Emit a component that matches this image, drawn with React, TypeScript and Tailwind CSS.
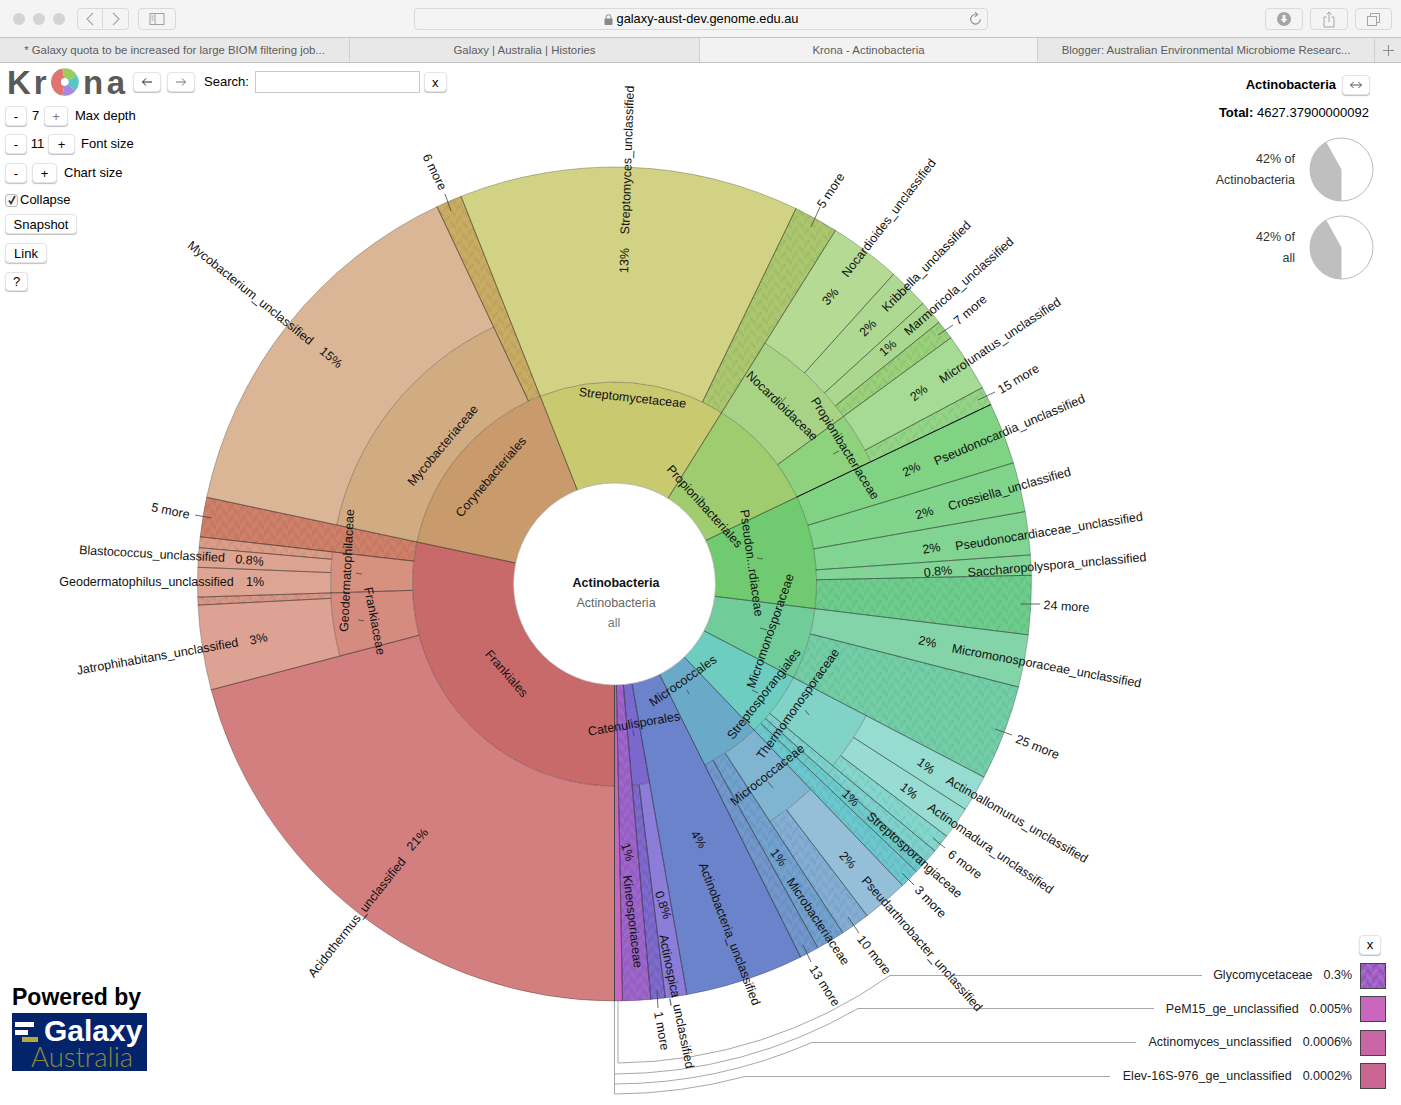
import React from "react";

const CX = 614.5;
const CY = 584;
const R0 = 101;
const R1 = 202;
const R2 = 284;
const R3 = 417;

const pt = (a: number, r: number): [number, number] => {
  const t = (a * Math.PI) / 180;
  return [CX + r * Math.sin(t), CY - r * Math.cos(t)];
};
const f = (n: number) => n.toFixed(2);
const wedgePath = (a0: number, a1: number, r0: number, r1: number) => {
  const [x0, y0] = pt(a0, r1);
  const [x1, y1] = pt(a1, r1);
  const [x2, y2] = pt(a1, r0);
  const [x3, y3] = pt(a0, r0);
  const large = a1 - a0 > 180 ? 1 : 0;
  return `M${f(x0)} ${f(y0)}A${r1} ${r1} 0 ${large} 1 ${f(x1)} ${f(y1)}L${f(x2)} ${f(y2)}A${r0} ${r0} 0 ${large} 0 ${f(x3)} ${f(y3)}Z`;
};

type W = [number, number, number, number, string, boolean?];
const wedges: W[] = [
  // Frankiales
  [180, 282, R0, R1, "#c96a6a"],
  [180, 255.3, R1, R3, "#d37f7f"],
  [255.3, 268.2, R1, R2, "#d58c7f"],
  [255.3, 267.1, R2, R3, "#dea294"],
  [267.1, 268.2, R2, R3, "#d69484", true],
  [268.2, 276.5, R1, R2, "#d6917f"],
  [268.2, 272.3, R2, R3, "#dea594"],
  [272.3, 275, R2, R3, "#dea492"],
  [275, 276.5, R2, R3, "#d99a86", true],
  [276.5, 282, R1, R3, "#cd7d66", true],
  // Corynebacteriales
  [282, 338.4, R0, R1, "#c99a6b"],
  [282, 334.8, R1, R2, "#d1ab81"],
  [282, 334.8, R2, R3, "#dab596"],
  [334.8, 338.4, R1, R3, "#c6aa60", true],
  // Streptomycetaceae
  [338.4, 392, R0, R1, "#c9ca6f"],
  [338.4, 385.8, R1, R3, "#d1d283"],
  [385.8, 392, R1, R3, "#a8c56b", true],
  // Propionibacteriales
  [32, 64.5, R0, R1, "#9ecc6f"],
  [32, 53.8, R1, R2, "#a8d384"],
  [32, 42, R2, R3, "#b5da94"],
  [42, 47.7, R2, R3, "#aed992"],
  [47.7, 51.1, R2, R3, "#aad88f"],
  [51.1, 53.8, R2, R3, "#97cf78", true],
  [53.8, 64.5, R1, R2, "#8ed27e"],
  [53.8, 61.9, R2, R3, "#a5db94"],
  [61.9, 64.5, R2, R3, "#90d384", true],
  // Pseudonocardiales
  [64.5, 97, R0, R1, "#70cb70"],
  [64.5, 73.1, R1, R3, "#7fd383"],
  [73.1, 80, R1, R3, "#80d48b"],
  [80, 86, R1, R3, "#81d491"],
  [86, 88.8, R1, R3, "#82d597"],
  [88.8, 97, R1, R3, "#6bcb8a", true],
  // Micromonosporales
  [97, 117.6, R0, R1, "#70cd9a"],
  [97, 104.3, R1, R3, "#83d5a9"],
  [104.3, 117.6, R1, R3, "#70cca4", true],
  // Streptosporangiales
  [117.6, 136.3, R0, R1, "#6ecdc1"],
  [117.6, 129.8, R1, R2, "#80d3c6"],
  [117.6, 122.7, R2, R3, "#97dcd0"],
  [122.7, 127.2, R2, R3, "#98dcd3"],
  [127.2, 129.8, R2, R3, "#82d5cb", true],
  [129.8, 131.7, R1, R3, "#7ccfcb", true],
  [131.7, 133.6, R1, R3, "#6cc8c8", true],
  [133.6, 136.3, R1, R3, "#69c6cc", true],
  // Micrococcales
  [136.3, 153.5, R0, R1, "#6ba9c9"],
  [136.3, 146.8, R1, R2, "#80b5d2"],
  [136.3, 142.7, R2, R3, "#95bfd9"],
  [142.7, 146.8, R2, R3, "#81abd1", true],
  [146.8, 150.8, R1, R3, "#6f9fcc", true],
  [150.8, 153.5, R1, R3, "#6f94ca", true],
  // unclassified
  [153.5, 170, R0, R3, "#6b83cb"],
  // Catenulisporales
  [170, 175, R0, R1, "#7a68cc"],
  [170, 173, R1, R3, "#8b7dd8"],
  [173, 175, R1, R3, "#7b66c9", true],
  // Kineosporiales
  [175, 178.9, R0, R3, "#9a62c9", true],
  [178.9, 180, R0, R3, "#c566c1"],
];

type Lb = [string, number, number, number, number];
const labels: Lb[] = [
  ["Streptomyces_unclassified", 625, 236, 630, 84],
  ["13%", 624, 273, 625, 248],
  ["6 more", 425, 153, 444, 191],
  ["Mycobacterium_unclassified", 186, 241, 315, 345],
  ["15%", 321, 349, 341, 366],
  ["Mycobacteriaceae", 408, 487, 478, 404],
  ["Corynebacteriales", 456, 518, 526, 436],
  ["Streptomycetaceae", 578, 392, 687, 404],
  ["Propionibacteriales", 667, 465, 742, 548],
  ["Pseudon...rdiaceae", 744, 509, 759, 617],
  ["Micromonosporaceae", 750, 690, 791, 572],
  ["Streptosporangiales", 728, 740, 800, 648],
  ["Thermomonosporaceae", 758, 760, 838, 648],
  ["Micrococcales", 649, 705, 717, 657],
  ["Catenulisporales", 587, 732, 681, 716],
  ["Micrococcaceae", 731, 804, 804, 746],
  ["Frankiales", 486, 650, 527, 697],
  ["Frankiaceae", 368, 587, 381, 655],
  ["Geodermatophilaceae", 344, 632, 350, 509],
  ["Nocardioidaceae", 747, 372, 817, 440],
  ["Propionibacteriaceae", 813, 397, 877, 500],
  ["5 more", 818, 210, 844, 171],
  ["Nocardioides_unclassified", 842, 279, 936, 157],
  ["3%", 823, 305, 838, 288],
  ["Kribbella_unclassified", 882, 312, 971, 221],
  ["2%", 860, 336, 876, 320],
  ["Marmoricola_unclassified", 903, 336, 1015, 237],
  ["1%", 880, 355, 896, 341],
  ["7 more", 953, 325, 988, 295],
  ["Microlunatus_unclassified", 938, 382, 1062, 299],
  ["2%", 910, 400, 928, 386],
  ["15 more", 997, 392, 1040, 366],
  ["Pseudonocardia_unclassified", 932, 463, 1087, 397],
  ["2%", 902, 474, 921, 465],
  ["Crossiella_unclassified", 947, 507, 1072, 471],
  ["2%", 915, 516, 934, 510],
  ["Pseudonocardiaceae_unclassified", 953, 547, 1145, 516],
  ["2%", 922, 550, 941, 547],
  ["Saccharopolyspora_unclassified", 966, 573, 1148, 557],
  ["0.8%", 923, 573, 953, 570],
  ["24 more", 1043, 605, 1090, 608],
  ["Micromonosporaceae_unclassified", 950, 648, 1143, 684],
  ["2%", 918, 640, 937, 644],
  ["25 more", 1015, 738, 1060, 756],
  ["Actinoallomurus_unclassified", 945, 778, 1089, 861],
  ["1%", 918, 760, 934, 772],
  ["Actinomadura_unclassified", 926, 804, 1055, 893],
  ["1%", 901, 785, 917, 797],
  ["6 more", 947, 851, 983, 878],
  ["Streptosporangiaceae", 866, 812, 963, 898],
  ["1%", 843, 791, 858, 805],
  ["3 more", 914, 885, 947, 919],
  ["Pseudarthrobacter_unclassified", 862, 876, 982, 1012],
  ["2%", 839, 851, 856, 869],
  ["10 more", 858, 935, 890, 975],
  ["Microbacteriaceae", 788, 877, 848, 966],
  ["1%", 772, 849, 785, 866],
  ["13 more", 811, 965, 838, 1007],
  ["Actinobacteria_unclassified", 702, 862, 757, 1006],
  ["4%", 693, 831, 704, 848],
  ["Actinospica_unclassified", 663, 934, 690, 1069],
  ["0.8%", 658, 890, 668, 920],
  ["Kineosporiaceae", 627, 875, 638, 968],
  ["1%", 625, 844, 630, 860],
  ["1 more", 658, 1012, 665, 1050],
  ["Acidothermus_unclassified", 309, 978, 405, 857],
  ["21%", 407, 851, 428, 828],
  ["Jatrophihabitans_unclassified", 75, 671, 240, 642],
  ["3%", 249, 641, 268, 637],
  ["Geodermatophilus_unclassified", 58, 582, 235, 582],
  ["1%", 246, 582, 264, 582],
  ["Blastococcus_unclassified", 78, 550, 226, 558],
  ["0.8%", 235, 559, 264, 562],
  ["5 more", 151, 507, 190, 515],
];

const ticks: number[][] = [
  [445, 194, 451, 211],
  [820, 207, 811, 227],
  [953, 325, 938, 335],
  [995, 392, 978, 400],
  [1040, 604, 1021, 604],
  [1012, 735, 995, 729],
  [945, 848, 933, 838],
  [914, 885, 902, 873],
  [859, 933, 848, 917],
  [811, 962, 803, 945],
  [658, 1008, 657, 990],
  [195, 515, 212, 518],
  [786, 397, 781, 403],
  [833, 454, 839, 451],
  [757, 558, 763, 559],
  [760, 628, 767, 630],
  [752, 690, 758, 693],
  [805, 710, 809, 715],
  [687, 690, 689, 694],
  [633, 730, 634, 736],
  [768, 782, 773, 788],
  [356, 573, 362, 574],
  [358, 620, 364, 621],
];

const pointers = [
  { y: 975.5, r: 479, x0: 618, x1: 1202, ax: 890 },
  { y: 1008.5, r: 490, x0: 614.5, x1: 1154, ax: 858 },
  { y: 1042.5, r: 500, x0: 614.5, x1: 1136, ax: 812 },
  { y: 1076.5, r: 510, x0: 614.5, x1: 1110, ax: 745 },
];

const HatchStrokes = ({ o }: { o: number }) => (
  <>
    <path d="M0 6L6 0M6 6L12 12" stroke="#000" strokeOpacity={o} strokeWidth="1.6" strokeLinecap="round" fill="none" />
    <path d="M0 12L6 6M6 0L12 6" stroke="#fff" strokeOpacity={o} strokeWidth="1.6" strokeLinecap="round" fill="none" />
  </>
);

function KronaChart() {
  return (
    <svg viewBox="0 63 1401 1042" className="absolute inset-0 h-full w-full">
      <defs>
        <pattern id="hatch" patternUnits="userSpaceOnUse" width="12" height="12">
          <HatchStrokes o={0.055} />
        </pattern>
      </defs>
      {pointers.map((p) => (
        <path
          key={p.y}
          d={`M${p.x1} ${p.y}L${p.ax} ${p.y}A${p.r} ${p.r} 0 0 1 ${p.x0} ${CY + p.r}L${p.x0} 1000`}
          fill="none"
          stroke="#a8a8a8"
          strokeWidth="1"
        />
      ))}
      {wedges.map(([a0, a1, r0, r1, c, h], i) => (
        <g key={i}>
          <path d={wedgePath(a0, a1, r0, r1)} fill={c} />
          {h ? <path d={wedgePath(a0, a1, r0, r1)} fill="url(#hatch)" /> : null}
        </g>
      ))}
      {wedges.map(([a0, a1, r0, r1], i) => {
        const [ax, ay] = pt(a0, r0);
        const [bx, by] = pt(a0, r1);
        const [cx, cy] = pt(a1, r0);
        const [dx, dy] = pt(a1, r1);
        return (
          <g key={i} fill="none">
            <path
              d={`M${f(bx)} ${f(by)}A${r1} ${r1} 0 0 1 ${f(dx)} ${f(dy)}`}
              stroke="#000"
              strokeOpacity={r1 === R3 ? 0.3 : 0.35}
              strokeWidth="0.8"
            />
            <path d={`M${f(ax)} ${f(ay)}L${f(bx)} ${f(by)}M${f(cx)} ${f(cy)}L${f(dx)} ${f(dy)}`} stroke="#000" strokeOpacity="0.38" strokeWidth="0.8" />
          </g>
        );
      })}
      <path d={`M${f(pt(64.5, R1)[0])} ${f(pt(64.5, R1)[1])}L${f(pt(64.5, R3)[0])} ${f(pt(64.5, R3)[1])}`} stroke="#111" strokeWidth="0.9" />
      <path d={`M${f(pt(180, R0)[0])} ${f(pt(180, R0)[1])}L${f(pt(180, R3)[0])} ${f(pt(180, R3)[1])}`} stroke="#444" strokeWidth="1" />
      <circle cx={CX} cy={CY} r={R0} fill="#fff" stroke="#999" strokeWidth="0.6" />
      {ticks.map((t, i) => (
        <line key={i} x1={t[0]} y1={t[1]} x2={t[2]} y2={t[3]} stroke="#444" strokeWidth="0.8" />
      ))}
      <g fontFamily='"Liberation Sans", Arial, sans-serif' fontSize="12.5" fill="#111">
        {labels.map(([t, x1, y1, x2, y2], i) => {
          const mx = (x1 + x2) / 2;
          const my = (y1 + y2) / 2;
          const ang = (Math.atan2(y2 - y1, x2 - x1) * 180) / Math.PI;
          return (
            <text key={i} x={mx} y={my} textAnchor="middle" dominantBaseline="central" transform={`rotate(${ang.toFixed(2)} ${mx} ${my})`}>
              {t}
            </text>
          );
        })}
        <text x="616" y="583" textAnchor="middle" dominantBaseline="central" fontWeight="700">Actinobacteria</text>
        <text x="616" y="603" textAnchor="middle" dominantBaseline="central" fill="#666">Actinobacteria</text>
        <text x="614" y="623" textAnchor="middle" dominantBaseline="central" fill="#777">all</text>
      </g>
    </svg>
  );
}

const btn = "flex items-center justify-center rounded-[4px] border border-[#e4e4e4] bg-white shadow-[0_1px_1px_rgba(0,0,0,0.25)] text-[13px] leading-none";

function KronaLogo() {
  const seg = (a0: number, a1: number, c: string) => {
    const p = (a: number, r: number) => {
      const t = (a * Math.PI) / 180;
      return `${(14 + r * Math.sin(t)).toFixed(2)} ${(14 - r * Math.cos(t)).toFixed(2)}`;
    };
    return <path d={`M${p(a0, 14)}A14 14 0 0 1 ${p(a1, 14)}L${p(a1, 4)}A4 4 0 0 0 ${p(a0, 4)}Z`} fill={c} />;
  };
  return (
    <div className="flex h-[30px] w-[125px] items-center pl-[7px] text-[33px] font-bold leading-none text-[#5a5a5a]">
      <span className="w-[27px]">K</span>
      <span className="w-[18px]">r</span>
      <svg width="28" height="28" viewBox="0 0 28 28" className="mr-[4px]">
        {seg(190, 350, "#e27373")}
        {seg(350, 62, "#9ecb5f")}
        {seg(62, 130, "#56c6c6")}
        {seg(130, 190, "#a78ae0")}
      </svg>
      <span className="w-[24px]">n</span>
      <span>a</span>
    </div>
  );
}

function Stepper({ value, label, w1, w2, plusClass, ml }: { value?: string; label: string; w1: string; w2: string; plusClass?: string; ml: string }) {
  return (
    <div className="flex h-[20px] items-center">
      <div className={`${btn} h-[20px] w-[22px]`}>-</div>
      {value ? <span className={`${w1} text-center text-[13px]`}>{value}</span> : <span className={w1} />}
      <div className={`${btn} h-[20px] ${w2} ${plusClass ?? ""}`}>+</div>
      <span className={`${ml} text-[13px]`}>{label}</span>
    </div>
  );
}

function ToolbarBtn({ className, children }: { className: string; children?: React.ReactNode }) {
  return <div className={`flex h-[22px] items-center justify-center rounded-[4px] border border-[#d9d9d9] ${className}`}>{children}</div>;
}

const legend = [
  { n: "Glycomycetaceae", p: "0.3%", c: "#a05fc8", h: true },
  { n: "PeM15_ge_unclassified", p: "0.005%", c: "#cb66bf", h: false },
  { n: "Actinomyces_unclassified", p: "0.0006%", c: "#c966a6", h: false },
  { n: "Elev-16S-976_ge_unclassified", p: "0.0002%", c: "#c96692", h: false },
];

const Pie = () => (
  <svg width="65" height="65" viewBox="0 0 65 65">
    <circle cx="32.5" cy="32.5" r="31.5" fill="#fff" stroke="#bbb" />
    <path d="M32.5 32.5L32.5 64A31.5 31.5 0 0 1 17.2 5Z" fill="#bfbfbf" />
  </svg>
);

export default function App() {
  return (
    <div className="flex h-[1105px] w-[1401px] flex-col overflow-hidden bg-white font-['Liberation_Sans',Arial,sans-serif] text-black">
      {/* Browser toolbar */}
      <div className="flex h-[37px] shrink-0 items-center bg-[#f4f4f4] pt-[1px]">
        <div className="ml-[13px] flex gap-[8px]">
          <span className="h-[12px] w-[12px] rounded-full bg-[#d4d4d4]" />
          <span className="h-[12px] w-[12px] rounded-full bg-[#d4d4d4]" />
          <span className="h-[12px] w-[12px] rounded-full bg-[#d4d4d4]" />
        </div>
        <ToolbarBtn className="ml-[12px] w-[26px] rounded-r-none">
          <svg width="10" height="16" viewBox="0 0 10 16" fill="none" stroke="#a8a8a8" strokeWidth="1.2"><path d="M8 2L2 8l6 6" /></svg>
        </ToolbarBtn>
        <ToolbarBtn className="w-[26px] rounded-l-none border-l-0">
          <svg width="10" height="16" viewBox="0 0 10 16" fill="none" stroke="#a8a8a8" strokeWidth="1.2"><path d="M2 2l6 6-6 6" /></svg>
        </ToolbarBtn>
        <ToolbarBtn className="ml-[9px] w-[38px]">
          <svg width="16" height="12" viewBox="0 0 16 12" fill="none" stroke="#a0a0a0"><rect x="1" y="0.5" width="14" height="11" /><path d="M6 0.5v11M2.5 3h2M2.5 5h2M2.5 7h2" /></svg>
        </ToolbarBtn>
        <div className="relative ml-[238px] flex h-[22px] w-[574px] items-center justify-center rounded-[4px] border border-[#d9d9d9] text-[12.8px]">
          <svg width="9" height="11" viewBox="0 0 9 11" className="mr-[4px]"><path d="M2 5V3.2a2.5 2.5 0 0 1 5 0V5" fill="none" stroke="#8a8a8a" /><rect x="0.5" y="4.5" width="8" height="6.5" rx="1" fill="#8a8a8a" /></svg>
          <span>galaxy-aust-dev.genome.edu.au</span>
          <svg width="13" height="14" viewBox="0 0 13 14" fill="none" stroke="#888" strokeWidth="1.1" className="absolute right-[5px] top-[3px]"><path d="M6.5 2.5a4.8 4.8 0 1 0 4.8 4.8" /><path d="M6 0.3l2.6 2.2L6 4.7" /></svg>
        </div>
        <ToolbarBtn className="ml-[277px] w-[38px]">
          <svg width="14" height="14" viewBox="0 0 14 14"><circle cx="7" cy="7" r="7" fill="#a5a5a5" /><path d="M5.5 3h3v4h2L7 11 3.5 7h2z" fill="#f4f4f4" /></svg>
        </ToolbarBtn>
        <ToolbarBtn className="ml-[7px] w-[38px]">
          <svg width="12" height="17" viewBox="0 0 12 17" fill="none" stroke="#a5a5a5"><path d="M3.5 6H1v10h10V6H8.500" /><path d="M6 11V1M3.500 3.500L6 1l2.500 2.500" /></svg>
        </ToolbarBtn>
        <ToolbarBtn className="ml-[7px] w-[37px]">
          <svg width="13" height="13" viewBox="0 0 13 13" fill="none" stroke="#a5a5a5"><rect x="0.500" y="3.500" width="9" height="9" /><path d="M3.500 3.500v-3h9v9h-3" /></svg>
        </ToolbarBtn>
      </div>
      {/* Tabs */}
      <div className="flex h-[26px] shrink-0 border-y border-[#c4c4c4] bg-[#e8e8e8] text-[11.4px] leading-none text-[#5c5c5c]">
        <div className="flex w-[350px] items-center justify-center border-r border-[#d0d0d0] pt-[1px]">* Galaxy quota to be increased for large BIOM filtering job...</div>
        <div className="flex w-[350px] items-center justify-center border-r border-[#d0d0d0] pt-[1px]">Galaxy | Australia | Histories</div>
        <div className="flex w-[338px] items-center justify-center border-r border-[#d0d0d0] bg-[#f2f2f2] pt-[1px]">Krona - Actinobacteria</div>
        <div className="flex w-[337px] items-center justify-center border-r border-[#d0d0d0] pt-[1px]">Blogger: Australian Environmental Microbiome Researc...</div>
        <div className="flex flex-1 items-center justify-center">
          <svg width="11" height="11" viewBox="0 0 11 11" stroke="#8a8a8a"><path d="M5.500 0v11M0 5.500h11" /></svg>
        </div>
      </div>
      {/* Krona canvas */}
      <div className="relative flex-1">
        <KronaChart />

        {/* Header row of controls */}
        <div className="absolute left-0 top-[4px] flex items-center">
          <KronaLogo />
          <div className={`${btn} ml-[8px] h-[20px] w-[28px]`}>
            <svg width="12" height="10" viewBox="0 0 12 10" fill="none" stroke="#222"><path d="M11 5H1.500M5 1.500L1.500 5 5 8.500" /></svg>
          </div>
          <div className={`${btn} ml-[6px] h-[20px] w-[28px]`}>
            <svg width="12" height="10" viewBox="0 0 12 10" fill="none" stroke="#777"><path d="M1 5h9.500M7 1.500L10.500 5 7 8.500" /></svg>
          </div>
          <span className="ml-[9px] text-[13px]">Search:</span>
          <div className="ml-[6px] h-[22px] w-[165px] border border-[#c8c8c8] bg-white" />
          <div className={`${btn} ml-[4px] h-[20px] w-[23px]`}>x</div>
        </div>

        {/* Left controls */}
        <div className="absolute left-[5px] top-[43px] flex flex-col items-start">
          <Stepper value="7" label="Max depth" w1="w-[17px]" w2="w-[24px]" plusClass="text-[#778]" ml="ml-[7px]" />
          <div className="mt-[8px]"><Stepper value="11" label="Font size" w1="w-[21px]" w2="w-[27px]" ml="ml-[6px]" /></div>
          <div className="mt-[9px]"><Stepper label="Chart size" w1="w-[5px]" w2="w-[25px]" ml="ml-[7px]" /></div>
          <div className="mt-[8px] flex h-[18px] items-center text-[13px]">
            <span className="flex h-[13px] w-[13px] items-center justify-center rounded-[3px] border border-[#bbb] bg-[#f5f5f5]">
              <svg width="10" height="10" viewBox="0 0 10 10" fill="none" stroke="#333" strokeWidth="1.6"><path d="M2 5.500L4 8.500 8 1" /></svg>
            </span>
            <span className="ml-[2px]">Collapse</span>
          </div>
          <div className={`${btn} mt-[5px] h-[20px] w-[72px]`}>Snapshot</div>
          <div className={`${btn} mt-[9px] h-[20px] w-[42px]`}>Link</div>
          <div className={`${btn} mt-[9px] h-[19px] w-[23px]`}>?</div>
        </div>

        {/* Right details */}
        <div className="absolute right-[31px] top-[12px] flex w-[260px] flex-col items-end text-[13px]">
          <div className="flex h-[20px] items-center">
            <span className="font-bold">Actinobacteria</span>
            <div className={`${btn} ml-[6px] h-[20px] w-[28px]`}>
              <svg width="12" height="8" viewBox="0 0 12 8" fill="none" stroke="#555"><path d="M0.500 4h11M3.500 1L0.500 4l3 3M8.500 1l3 3-3 3" /></svg>
            </div>
          </div>
          <div className="mr-[1px] mt-[9px] leading-[18px]"><b>Total:</b> 4627.37900000092</div>
          <div className="mr-[-4px] mt-[15px] flex items-center text-[12.5px] text-[#333]">
            <div className="mr-[14px] text-right leading-[21px]">42% of<br />Actinobacteria</div>
            <Pie />
          </div>
          <div className="mr-[-4px] mt-[13px] flex items-center text-[12.5px] text-[#333]">
            <div className="mr-[14px] text-right leading-[21px]">42% of<br />all</div>
            <Pie />
          </div>
        </div>

        {/* Pointer legend */}
        <div className="absolute bottom-[16px] right-[15px] flex flex-col items-end">
          <div className={`${btn} mb-[8px] mr-[5px] h-[20px] w-[22px]`}>x</div>
          {legend.map((l) => (
            <div key={l.n} className="mb-[7.5px] flex h-[26px] items-center text-[12.5px] text-[#222] last:mb-0">
              <span>{l.n}</span>
              <span className="ml-[11px]">{l.p}</span>
              <svg width="26" height="26" viewBox="0 0 26 26" className="ml-[8px]">
                <defs>
                  <pattern id={`lh-${l.n}`} patternUnits="userSpaceOnUse" width="12" height="12">
                    <HatchStrokes o={0.12} />
                  </pattern>
                </defs>
                <rect x="0.500" y="0.500" width="25" height="25" fill={l.c} stroke="#444" />
                {l.h ? <rect x="1" y="1" width="24" height="24" fill={`url(#lh-${l.n})`} /> : null}
              </svg>
            </div>
          ))}
        </div>

        {/* Powered by */}
        <div className="absolute bottom-[34px] left-[12px] flex flex-col">
          <span className="text-[23px] font-bold leading-[26px]">Powered by</span>
          <div className="relative mt-[3px] h-[58px] w-[135px] bg-[#03236b]">
            <span className="absolute left-[3px] top-[9px] h-[5px] w-[19px] bg-white" />
            <span className="absolute left-[3px] top-[17px] h-[5px] w-[13px] bg-white" />
            <span className="absolute left-[10px] top-[24px] h-[5px] w-[16px] bg-[#b8a93a]" />
            <span className="absolute left-[32px] top-[5px] text-[30px] font-bold leading-[26px] text-white">Galaxy</span>
            <span className="absolute left-[19px] top-[31px] font-['Lato',sans-serif] text-[27.5px] font-light leading-[26px] text-[#8a8a3a]">Australia</span>
          </div>
        </div>
      </div>
    </div>
  );
}
